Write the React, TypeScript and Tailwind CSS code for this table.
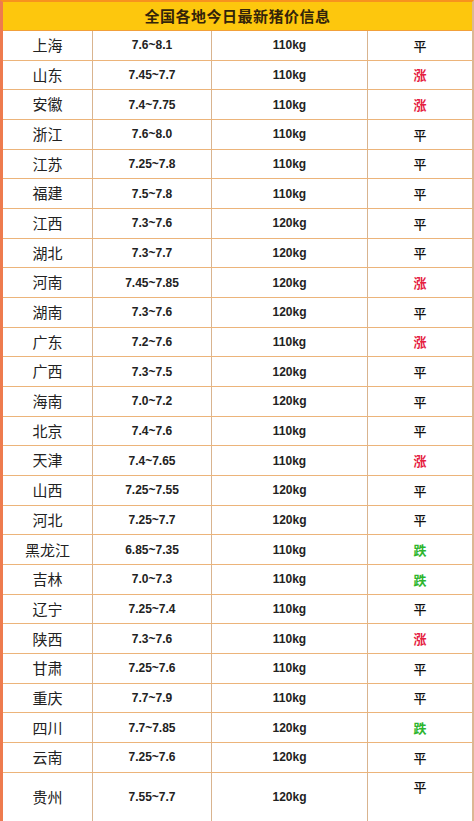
import React from "react";

type Row = { name: string; price: string; weight: string; trend: "平" | "涨" | "跌" };

const rows: Row[] = [
  { name: "上海", price: "7.6~8.1", weight: "110kg", trend: "平" },
  { name: "山东", price: "7.45~7.7", weight: "110kg", trend: "涨" },
  { name: "安徽", price: "7.4~7.75", weight: "110kg", trend: "涨" },
  { name: "浙江", price: "7.6~8.0", weight: "110kg", trend: "平" },
  { name: "江苏", price: "7.25~7.8", weight: "110kg", trend: "平" },
  { name: "福建", price: "7.5~7.8", weight: "110kg", trend: "平" },
  { name: "江西", price: "7.3~7.6", weight: "120kg", trend: "平" },
  { name: "湖北", price: "7.3~7.7", weight: "120kg", trend: "平" },
  { name: "河南", price: "7.45~7.85", weight: "120kg", trend: "涨" },
  { name: "湖南", price: "7.3~7.6", weight: "120kg", trend: "平" },
  { name: "广东", price: "7.2~7.6", weight: "110kg", trend: "涨" },
  { name: "广西", price: "7.3~7.5", weight: "120kg", trend: "平" },
  { name: "海南", price: "7.0~7.2", weight: "120kg", trend: "平" },
  { name: "北京", price: "7.4~7.6", weight: "110kg", trend: "平" },
  { name: "天津", price: "7.4~7.65", weight: "110kg", trend: "涨" },
  { name: "山西", price: "7.25~7.55", weight: "120kg", trend: "平" },
  { name: "河北", price: "7.25~7.7", weight: "120kg", trend: "平" },
  { name: "黑龙江", price: "6.85~7.35", weight: "110kg", trend: "跌" },
  { name: "吉林", price: "7.0~7.3", weight: "110kg", trend: "跌" },
  { name: "辽宁", price: "7.25~7.4", weight: "110kg", trend: "平" },
  { name: "陕西", price: "7.3~7.6", weight: "110kg", trend: "涨" },
  { name: "甘肃", price: "7.25~7.6", weight: "110kg", trend: "平" },
  { name: "重庆", price: "7.7~7.9", weight: "110kg", trend: "平" },
  { name: "四川", price: "7.7~7.85", weight: "120kg", trend: "跌" },
  { name: "云南", price: "7.25~7.6", weight: "120kg", trend: "平" },
  { name: "贵州", price: "7.55~7.7", weight: "120kg", trend: "平" },
];

const trendColor = (t: Row["trend"]) =>
  t === "涨" ? "text-[#e5213f] font-bold" : t === "跌" ? "text-[#2db52d] font-bold" : "text-[#111] font-medium";

const cjk = "font-['Noto_Sans_CJK_SC',sans-serif]";
const num = "font-['Liberation_Sans',Arial,sans-serif] font-bold";

export default function App() {
  return (
    <div className="w-[474px] h-[821px] overflow-hidden bg-white border-t-2 border-t-[#f7931e] border-l-[3px] border-l-[#ee7b4e] border-r-2 border-r-[#dcb894] flex flex-col">
      {/* 标题 */}
      <div
        className={`h-[29px] shrink-0 bg-[#fdc70d] border-b border-b-[#f2a03a] flex items-center justify-center text-[15px] tracking-[0.5px] font-bold text-[#33240a] ${cjk}`}
      >
        全国各地今日最新猪价信息
      </div>

      {rows.map((r, i) => {
        const last = i === rows.length - 1;
        return (
          <div
            key={r.name}
            className={`grid grid-cols-[90px_119px_156px_1fr] shrink-0 text-[#222] ${
              last ? "flex-1" : "h-[29.68px] border-b border-b-[#ecb47a]"
            }`}
          >
            <div className={`border-r border-r-[#d9b48f] flex items-center justify-center text-[15px] ${cjk}`}>
              {r.name}
            </div>
            <div className={`border-r border-r-[#d9b48f] flex items-center justify-center text-[12px] ${num}`}>
              {r.price}
            </div>
            <div className={`border-r border-r-[#d9b48f] flex items-center justify-center text-[12px] ${num}`}>
              {r.weight}
            </div>
            <div
              className={`flex justify-center text-[13px] ${cjk} ${trendColor(r.trend)} ${
                last ? "items-start pt-[4px]" : "items-center"
              }`}
            >
              {r.trend}
            </div>
          </div>
        );
      })}
    </div>
  );
}
